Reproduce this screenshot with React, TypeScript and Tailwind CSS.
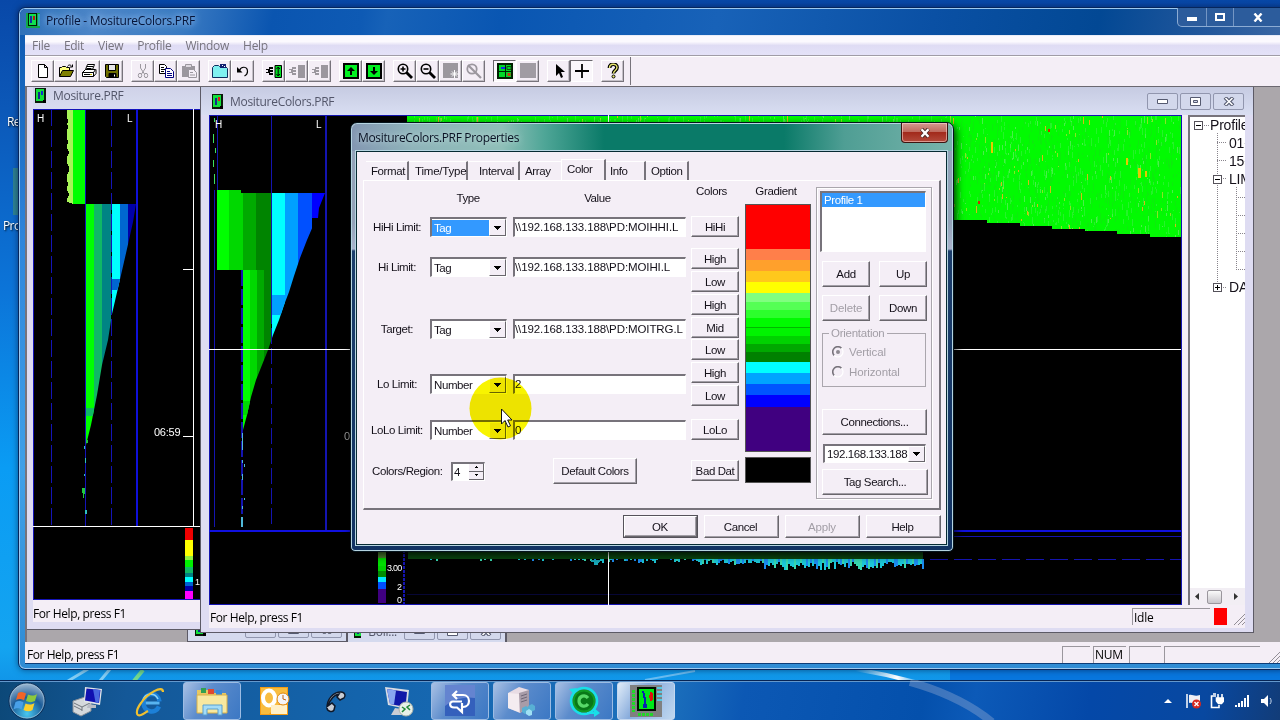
import clsx from "clsx";
import type { ReactNode } from "react";

const SEGOE = "font-['Open_Sans',sans-serif]";
const SANS =
  "font-['Liberation_Sans',sans-serif] text-[11.5px] tracking-[-0.4px] leading-[14px]";

// small seeded generator so the noise is the same on every render
function random(seed: number) {
  let s = seed;
  return () => {
    s = (s * 16807) % 2147483647;
    return s / 2147483647;
  };
}

// dashed line as a run of filled bars, stays sharp at one pixel
function dashes(x: number, y: number, end: number, on: number, off: number, vertical = true) {
  let d = "";
  for (let p = vertical ? y : x; p < end; p += on + off) {
    const len = Math.min(on, end - p);
    d += vertical ? `M${x} ${p}h1v${len}h-1z` : `M${p} ${y}h${len}v1h-${len}z`;
  }
  return d;
}

function Button({
  children,
  className,
  disabled,
}: {
  children: ReactNode;
  className?: string;
  disabled?: boolean;
}) {
  return (
    <button
      className={clsx(
        "flex shrink-0 items-center justify-center whitespace-nowrap border border-t-white border-l-white border-r-[#69666c] border-b-[#69666c] bg-[#f4eef6] shadow-[inset_-1px_-1px_0_#a29ea6]",
        disabled ? "text-[#a29ea6]" : "text-[#15111a]",
        className,
      )}
    >
      {children}
    </button>
  );
}

function DropArrow({ className }: { className?: string }) {
  return (
    <div
      className={clsx(
        "flex w-[17px] shrink-0 items-center justify-center self-stretch border border-t-white border-l-white border-r-[#69666c] border-b-[#69666c] bg-[#f4eef6]",
        className,
      )}
    >
      <svg width="7" height="4" shapeRendering="crispEdges">
        <path d="M0 0h7v1H0zM1 1h5v1H1zM2 2h3v1H2zM3 3h1v1H3z" />
      </svg>
    </div>
  );
}

function Combo({ value, active }: { value: string; active?: boolean }) {
  return (
    <div className="flex h-5 w-[77px] items-center border-t-2 border-l-2 border-r border-b border-t-[#77737b] border-l-[#77737b] border-r-white border-b-white bg-white">
      <div
        className={clsx(
          "flex h-[16px] grow items-center pt-px pl-[2px]",
          active && "bg-[#3399ff] text-white",
        )}
      >
        {value}
      </div>
      <DropArrow />
    </div>
  );
}

const limits = [
  { label: "HiHi Limit:", type: "Tag", value: "\\\\192.168.133.188\\PD:MOIHHI.L", gap: "mt-[11px]" },
  { label: "Hi Limit:", type: "Tag", value: "\\\\192.168.133.188\\PD:MOIHI.L", gap: "mt-[20px]" },
  { label: "Target:", type: "Tag", value: "\\\\192.168.133.188\\PD:MOITRG.L", gap: "mt-[42px]" },
  { label: "Lo Limit:", type: "Number", value: "2", gap: "mt-[35px]" },
  { label: "LoLo Limit:", type: "Number", value: "0", gap: "mt-[26px]" },
];

const colorButtons = [
  { label: "HiHi", gap: "mt-[11px]" },
  { label: "High", gap: "mt-[11px]" },
  { label: "Low", gap: "mt-[2px]" },
  { label: "High", gap: "mt-[2px]" },
  { label: "Mid", gap: "mt-[2px]" },
  { label: "Low", gap: "mt-[1px]" },
  { label: "High", gap: "mt-[2px]" },
  { label: "Low", gap: "mt-[2px]" },
  { label: "LoLo", gap: "mt-[13px]" },
  { label: "Bad Dat", gap: "mt-[20px]" },
];

const gradient = [
  "bg-[#ff0000] h-[44px]",
  "bg-[#ff7f4a] h-[11px]",
  "bg-[#ffa02c] h-[11px]",
  "bg-[#ffc81c] h-[11px]",
  "bg-[#ffff00] h-[11px]",
  "bg-[#80ff80] h-[9px]",
  "bg-[#55ff55] h-[8px]",
  "bg-[#2cff2c] h-[8px]",
  "bg-[#00fb00] h-[9px]",
  "bg-[#00f400] h-[9px] border-t border-[#00b800]",
  "bg-[#00d200] h-[8px]",
  "bg-[#00a800] h-[8px]",
  "bg-[#008000] h-[10px]",
  "bg-[#00ffff] h-[11px]",
  "bg-[#00a4ff] h-[11px]",
  "bg-[#0055ff] h-[11px]",
  "bg-[#0000ff] h-[12px]",
  "bg-[#400080] h-[44px]",
];

function Tabs() {
  const tab = "flex h-[19px] items-center border-t border-white";
  return (
    <div className="flex h-[21px] items-end pl-[9px]">
      <div className={clsx(tab, "w-[43px] border-r-2 border-r-[#77737b] pl-[5px]")}>Format</div>
      <div className={clsx(tab, "w-[59px] border-r-2 border-r-[#77737b] pl-[6px] tracking-[-0.2px]")}>Time/Type</div>
      <div className={clsx(tab, "w-[52px] border-r-2 border-r-[#77737b] pl-[11px] tracking-[-0.35px]")}>Interval</div>
      <div className={clsx(tab, "w-[41px] pl-[5px]")}>Array</div>
      <div className="flex h-[21px] w-[45px] items-start border-t border-l border-r-2 border-white border-r-[#77737b] pt-[2px] pl-[5px]">
        Color
      </div>
      <div className={clsx(tab, "w-[40px] border-r-2 border-r-[#77737b] pl-[4px]")}>Info</div>
      <div className={clsx(tab, "w-[43px] border-r-2 border-r-[#77737b] pl-[5px]")}>Option</div>
    </div>
  );
}

function LimitsForm() {
  return (
    <div className="w-[323px] pt-[10px]">
      <div className="flex h-[15px]">
        <div className="w-[66px]" />
        <div className="w-[82px] text-center">Type</div>
        <div className="w-[184px] text-center">Value</div>
      </div>
      {limits.map((l, i) => (
        <div key={l.label} className={clsx("flex h-5 items-center", l.gap)}>
          <div className="w-[66px] text-center">{l.label}</div>
          <Combo value={l.type} active={i === 0} />
          <div className="ml-[6px] flex h-5 w-[173px] items-start overflow-hidden whitespace-nowrap border-t-2 border-l-2 border-r border-b border-t-[#77737b] border-l-[#77737b] border-r-white border-b-white bg-white pt-px tracking-[-0.1px]">
            {l.value}
          </div>
        </div>
      ))}
      <div className="mt-[18px] flex h-[26px] items-center">
        <div className="w-[87px] pl-[8px]">Colors/Region:</div>
        <div className="flex h-[19px] w-[34px] border-t-2 border-l-2 border-r border-b border-t-[#77737b] border-l-[#77737b] border-r-white border-b-white bg-white">
          <span className="w-[16px] pt-px pl-px">4</span>
          <div className="flex w-[15px] flex-col">
            <div className="flex h-2 items-center justify-center border-r border-b border-[#69666c] bg-[#f4eef6]">
              <svg width="3" height="2" shapeRendering="crispEdges">
                <path d="M1 0h1v1H1zM0 1h3v1H0z" />
              </svg>
            </div>
            <div className="flex h-2 items-center justify-center border-r border-b border-[#69666c] bg-[#f4eef6]">
              <svg width="3" height="2" shapeRendering="crispEdges">
                <path d="M0 0h3v1H0zM1 1h1v1H1z" />
              </svg>
            </div>
          </div>
        </div>
        <Button className="ml-[68px] h-[26px] w-[84px]">Default Colors</Button>
      </div>
    </div>
  );
}

function Radio({ label, on }: { label: string; on?: boolean }) {
  return (
    <div className="flex h-5 items-center gap-[5px] pl-[9px] text-[#a29ea6]">
      <svg width="12" height="12" fill="none">
        <path d="M2.2 9.5A5 5 0 0 1 9.5 2.2" stroke="#77737b" strokeWidth="1.6" />
        <path d="M9.5 2.2A5 5 0 0 1 2.2 9.5" stroke="#fff" strokeWidth="1.2" />
        {on && <circle cx="6" cy="6" r="2" fill="#8d8991" />}
      </svg>
      <span className="tracking-[-0.1px]">{label}</span>
    </div>
  );
}

function ProfileGroup() {
  return (
    <div className="mt-[6px] ml-[5px] h-[312px] w-[116px] border border-[#aaa6ad] pt-[3px] pl-[3px] shadow-[inset_1px_1px_0_#fff,1px_1px_0_#fff]">
      <div className="h-[61px] w-[106px] border-t-2 border-l-2 border-r border-b border-t-[#77737b] border-l-[#77737b] border-r-white border-b-white bg-white">
        <div className="h-[14px] bg-[#3399ff] pl-[2px] leading-[15px] tracking-[-0.4px] text-white">Profile 1</div>
      </div>
      <div className="mt-[9px] ml-[2px] grid w-[105px] grid-cols-[48px_48px] gap-x-[9px] gap-y-[8px]">
        <Button className="h-[26px]">Add</Button>
        <Button className="h-[26px]">Up</Button>
        <Button className="h-[26px] tracking-[-0.1px]" disabled>
          Delete
        </Button>
        <Button className="h-[26px]">Down</Button>
      </div>
      <fieldset className="mt-[5px] ml-[2px] h-[61px] w-[104px] border border-[#aaa6ad]">
        <legend className="ml-[6px] px-[2px] tracking-[-0.25px] text-[#a29ea6]">Orientation</legend>
        <div className="mt-[2px]">
          <Radio label="Vertical" on />
          <Radio label="Horizontal" />
        </div>
      </fieldset>
      <Button className="mt-[22px] ml-[2px] h-[26px] w-[105px]">Connections...</Button>
      <div className="mt-[9px] ml-[3px] flex h-[19px] w-[103px] items-center border-t-2 border-l-2 border-r border-b border-t-[#77737b] border-l-[#77737b] border-r-white border-b-white bg-white">
        <span className="w-[83px] pl-[2px]">192.168.133.188</span>
        <DropArrow className="border-t-transparent border-l-transparent" />
      </div>
      <Button className="mt-[6px] ml-[2px] h-[26px] w-[106px]">Tag Search...</Button>
    </div>
  );
}

function PropertiesDialog() {
  return (
    <div
      className={clsx(
        SANS,
        "absolute top-[122px] left-[350px] flex h-[430px] w-[604px] flex-col rounded-t-[7px] rounded-b-[5px] border border-[#05141c] bg-[linear-gradient(#93a2b9,#93a2b9_100px,#aab3cc_126px,#1c3e6c_128px,#123363)] pr-[6px] pb-[6px] pl-[5px] text-[#15111a] shadow-[inset_0_0_0_1px_#b5d4e0,2px_3px_9px_rgba(0,0,0,.8)]",
      )}
    >
      <div className="-mr-[5px] -ml-[4px] mt-px flex h-[27px] shrink-0 justify-between rounded-t-[6px] bg-[linear-gradient(90deg,#8397b2,#8fb4ba_10%,#8fbfb8_25%,#4fa697_32%,#0a7a68_42%,#0a7a68_72%,#4f9e94_82%,#78b4ac)]">
        <span
          className={clsx(
            SEGOE,
            "pt-[6px] pl-[6px] text-[12px] leading-[15px] tracking-[-0.34px] text-[#0a1224] [text-shadow:0_0_6px_#cfe6e6]",
          )}
        >
          MositureColors.PRF Properties
        </span>
        <div className="-mt-px mr-[4px] flex h-[20px] w-[47px] items-center justify-center rounded-b-[4px] border border-t-0 border-[#3d1511] bg-[linear-gradient(#d39a90,#bf6b5f_45%,#a22a1c_50%,#b34a3c)] shadow-[inset_0_0_0_1px_rgba(255,220,215,.55)]">
          <svg width="12" height="10" viewBox="0 0 12 10">
            <path d="M2.5 1l7 8M9.5 1l-7 8" stroke="#4a2a28" strokeWidth="4" />
            <path d="M2.5 1.3l7 7.4M9.5 1.3l-7 7.4" stroke="#fff" strokeWidth="2.4" />
          </svg>
        </div>
      </div>
      <div className="h-[395px] border border-[#072a33] bg-[#f4eef6] pt-[7px] shadow-[0_0_0_1px_#b5d4e0]">
        <Tabs />
        <div className="ml-[6px] flex h-[330px] w-[578px] border-t border-l border-r-2 border-b-2 border-t-white border-l-white border-r-[#77737b] border-b-[#77737b]">
          <LimitsForm />
          <div className="ml-[4px] w-[48px] pt-[3px]">
            <div className="-mx-2 h-[21px] pr-[7px] text-center">Colors</div>
            {colorButtons.map((b, i) => (
              <Button key={i} className={clsx("h-[21px] w-full", b.gap)}>
                {b.label}
              </Button>
            ))}
          </div>
          <div className="ml-[6px] w-[66px] pt-[3px]">
            <div className="-mx-2 h-[20px] pr-[4px] text-center tracking-[-0.35px]">Gradient</div>
            <div className="border border-[#555]">
              {gradient.map((g) => (
                <div key={g} className={g} />
              ))}
            </div>
            <div className="mt-[5px] h-[26px] border border-[#555] bg-black" />
          </div>
          <ProfileGroup />
        </div>
        <div className="mt-[5px] flex gap-[6px] pl-[266px]">
          <div className="border border-[#55525a]">
            <Button className="h-[21px] w-[73px] pr-px">OK</Button>
          </div>
          <Button className="h-[23px] w-[75px] pr-[2px]">Cancel</Button>
          <Button className="h-[23px] w-[75px] pr-px tracking-[-0.2px]" disabled>
            Apply
          </Button>
          <Button className="h-[23px] w-[75px] pr-[2px]">Help</Button>
        </div>
      </div>
    </div>
  );
}

function ProfileIcon({ marker = "#1030d0" }: { marker?: string }) {
  return (
    <svg width="11" height="15" shapeRendering="crispEdges">
      <path d="M0 0h11v15H0z" fill="#0a1a0a" />
      <path d="M1 1h8v12H1z" fill="#12e03c" />
      <path d="M3 4h2v7H3z" fill="#102a90" />
      <path d="M6 3h2v4H6z" fill={marker} />
      <path d="M8 12h3v3H8z" fill="#000" />
    </svg>
  );
}

const disabledInk = "#9b979e";
const toolGroups: ReactNode[][] = [
  [
    <path d="M3.5 1.5h6l3 3v10h-9zM9.5 1.5v3h3" fill="#fff" stroke="#000" />,
    <g stroke="#000">
      <path d="M1.5 13.500V4.500h2l1-1h3l1 1h3v3" fill="#ffff80" />
      <path d="M1.500 13.500l3-6h11l-3 6z" fill="#808000" />
      <path d="M9.500 3.500c1-2 3-2 4.500 0M14.500 1.500v2.500h-2.500" fill="none" />
    </g>,
    <g stroke="#000">
      <path d="M4.500 6.500l2-5h7l-2 5M1.500 9.500l3-3h10l-2 3zM1.500 9.500h11v4h-11zM12.500 13.500l2.500-3v-4" fill="#fff" />
      <path d="M6 3.500h6M5.500 5.500h5M3 11.500h8" fill="none" />
      <path d="M9 11.500h2" stroke="#c0b000" />
    </g>,
    <g stroke="#000">
      <path d="M1.500 1.500h13v13h-12l-1-1z" fill="#6f6f00" />
      <path d="M4.500 1.500h7v6h-7z" fill="#e8e8e8" />
      <path d="M5 10.500h7v4h-7z" fill="#000" />
      <path d="M10.500 11.500v2" stroke="#fff" />
    </g>,
  ],
  [
    <g stroke={disabledInk} fill="none">
      <path d="M5.500 1v4l4 6M10.500 1v4l-4 6" />
      <ellipse cx="5" cy="12.500" rx="1.700" ry="2.200" />
      <ellipse cx="11" cy="12.500" rx="1.700" ry="2.200" />
    </g>,
    <g fill="#fff" stroke="#000080">
      <path d="M1.500 1.500h5l2 2v7h-7zM3 4.500h3M3 6.500h4M3 8.500h3" stroke="#000" />
      <path d="M7.500 5.500h5l3 3v6h-8zM9 8.500h3M9 10.500h5M9 12.500h5" />
    </g>,
    <g>
      <path d="M1 3h13v11H1z" fill={disabledInk} />
      <path d="M4.500 1.500h6v3h-6z" fill="#ddd8df" stroke={disabledInk} />
      <path d="M7.500 6.500h5l3 3v5h-8zM9 9.500h3M9 12h5" fill="#f4eef6" stroke={disabledInk} />
    </g>,
  ],
  [
    <g>
      <path d="M.5 4.500l2-2h4l1 1h6l2 2v9H.5z" fill="#80f0f0" stroke="#103060" />
      <path d="M8 1h6v4H8z" fill="#102070" />
      <path d="M10 2h1v1h-1zM12 3h1v1h-1z" fill="#fff" />
    </g>,
    <g>
      <path d="M4.500 7.500C6 3 12.500 3 12.500 8.500c0 2-1 3.500-3 4.500" fill="none" stroke="#000" strokeWidth="1.200" />
      <path d="M2 4v5.500h5.500z" />
    </g>,
  ],
  [
    <g>
      <path d="M0 6h3V4h4v2H4v1h3v2H4v1h3v2H3v-2H0V9h2V7H0z" />
      <path d="M9 2.500h6.500v12H9z" fill="#00e020" stroke="#000" />
      <path d="M12.200 4.500v8M10.500 6l1.700-2 1.700 2M10.500 11l1.700 2 1.700-2" stroke="#000" fill="none" />
    </g>,
    <g fill={disabledInk}>
      <path d="M0 6h3V4h4v2H4v1h3v2H4v1h3v2H3v-2H0V9h2V7H0z" />
      <path d="M9 2h7v13H9z" />
    </g>,
    <g fill={disabledInk}>
      <path d="M0 6h3V4h4v2H4v1h3v2H4v1h3v2H3v-2H0V9h2V7H0z" />
      <path d="M9 2h7v13H9z" />
    </g>,
  ],
  [
    <g>
      <path d="M1 1h14v14H1z" fill="#00f020" stroke="#000" strokeWidth="2" />
      <path d="M8 4l4 4H9v4H7V8H4z" />
    </g>,
    <g>
      <path d="M1 1h14v14H1z" fill="#00f020" stroke="#000" strokeWidth="2" />
      <path d="M8 12l4-4H9V4H7v4H4z" />
    </g>,
  ],
  [
    <g fill="none" stroke="#000">
      <circle cx="6" cy="6" r="4.700" strokeWidth="1.600" />
      <path d="M9.500 9.500l5.500 5.500" strokeWidth="2.800" />
      <path d="M3.500 6h5M6 3.500v5" strokeWidth="1.600" />
    </g>,
    <g fill="none" stroke="#000">
      <circle cx="6" cy="6" r="4.700" strokeWidth="1.600" />
      <path d="M9.500 9.500l5.500 5.500" strokeWidth="2.800" />
      <path d="M3.500 6h5" strokeWidth="1.600" />
    </g>,
    <g>
      <path d="M0 0h15v15H0z" fill={disabledInk} />
      <path d="M11.500 7v8M7.500 11h8M9 8.500l5 5M14 8.500l-5 5" stroke="#fff" />
    </g>,
    <g fill="none" stroke={disabledInk}>
      <circle cx="6" cy="6" r="4.700" strokeWidth="1.800" />
      <path d="M2 2l13 13" strokeWidth="2.200" />
    </g>,
  ],
  [
    <g>
      <path d="M1 1h14v14H1z" fill="#00d828" stroke="#002000" strokeWidth="2" />
      <path d="M8.500 2v12M2 8.500h12" stroke="#002000" />
      <path d="M4 4h4v2H4z" fill="#1030e0" />
      <path d="M10 3.500h4v3h-4z" fill="#00d828" stroke="#105010" />
      <path d="M10.500 10h3v3h-3z" fill="#c04010" />
    </g>,
    <path d="M0 0h16v15H0z" fill="#a09ca3" />,
  ],
  [
    <path d="M5 1v12l3-3 2 5 2-1-2-5h4z" />,
    <path d="M8 1v14M1 8h14" stroke="#000" strokeWidth="1.800" />,
  ],
  [
    <g fill="none">
      <path d="M4.500 5c0-5 7.500-5 7.500-.5 0 3-3.500 3-3.500 6" stroke="#000" strokeWidth="3.800" />
      <path d="M4.500 5c0-5 7.500-5 7.500-.5 0 3-3.500 3-3.500 6" stroke="#e8e870" strokeWidth="1.400" />
      <circle cx="8.500" cy="13.500" r="1.500" fill="#e8e870" stroke="#000" />
    </g>,
  ],
];

function Toolbar() {
  return (
    <div className="flex h-[30px] shrink-0 items-center gap-2 border-t border-white bg-[#f4eef6] pb-px pl-[6px]">
      {toolGroups.map((group, g) => (
        <div key={g} className="flex">
          {group.map((icon, i) => {
            const pressed = (g === 6 && i === 0) || (g === 7 && i === 1);
            return (
              <div
                key={i}
                className={clsx(
                  "flex h-[22px] w-[23px] items-center justify-center border",
                  pressed
                    ? "border-t-[#69666c] border-l-[#69666c] border-r-white border-b-white bg-[#faf7fb]"
                    : "border-t-white border-l-white border-r-[#77737b] border-b-[#77737b] shadow-[inset_-1px_-1px_0_#c4c0c7]",
                )}
              >
                <svg width="16" height="16" viewBox="0 0 16 16">
                  {icon}
                </svg>
              </div>
            );
          })}
        </div>
      ))}
      <div className="-ml-[2px] h-[28px] w-px bg-[#77737b]" />
    </div>
  );
}

function MoisturePlot() {
  const rnd = random(11);
  const ragged = Array.from({ length: 32 }, (_, i) => `${67 + (rnd() > 0.5 ? 1.5 : 0)},${109 + i * 3}`);
  return (
    <svg className="block" width="168" height="491" viewBox="33 109 168 491" shapeRendering="crispEdges">
      <path d="M33 109h168v491H33z" />
      <clipPath id="wedge">
        <path d="M86 204H136L133 222 129 240 124 262 118 288 112 314 108 340 102 365 97 395 91 425 86 445z" />
      </clipPath>
      <polygon points={`${ragged.join(" ")} 73,204 73,109`} fill="#a8f458" />
      <path d="M73 109h12v95H73z" fill="#00ff00" />
      <g fill="#1414b8">
        <path d="M33 109h1v491h-1zM33 109h168v1H33zM33 599h168v1H33zM85 109h1v417h-1z" />
        <path d={dashes(51, 109, 526, 17, 4)} />
        <path d={dashes(111, 109, 526, 17, 4)} />
      </g>
      <g clipPath="url(#wedge)">
        <path d="M86 204h8v250h-8z" fill="#00ff00" />
        <path d="M86 408h8v8h-8zM94 204h8v220h-8z" fill="#10b866" />
        <path d="M102 204h9v200h-9z" fill="#008484" />
        <path d="M112 204h8v130h-8z" fill="#00ffff" />
        <path d="M112 279h11v11h-11zM120 204h8v90h-8z" fill="#0066d0" />
        <path d="M128 204h9v40h-9z" fill="#0000a8" />
      </g>
      <path d="M136 109h2v417h-2z" fill="#1010d8" />
      <path d="M84 446h1v3h-1zM85 458h1v5h-1zM84 474h1v2h-1zM85 510h2v4h-2z" fill="#30c0c0" />
      <path d="M82 488h3v6h-1v4h-1v-5h-1zM86 440h2v3h-2z" fill="#20c840" />
      <path d="M193 109h1v417h-1zM33 526h168v1H33zM183 269h10v1h-10zM183 436h10v1h-10z" fill="#fff" />
      <path d="M185 528h8v12h-8z" fill="#f00000" />
      <path d="M185 540h8v16h-8z" fill="#ffff00" />
      <path d="M185 556h8v4h-8z" fill="#90f040" />
      <path d="M185 560h8v7h-8z" fill="#00f000" />
      <path d="M185 567h8v6h-8z" fill="#10b866" />
      <path d="M185 573h8v4h-8z" fill="#008080" />
      <path d="M185 577h8v5h-8z" fill="#00ffff" />
      <path d="M185 582h8v4h-8z" fill="#0060d0" />
      <path d="M185 586h8v5h-8z" fill="#0000a8" />
      <path d="M185 591h8v8h-8z" fill="#ff00ff" />
      <g fill="#fff" fontFamily="Liberation Sans" fontSize="10">
        <text x="37" y="122">H</text>
        <text x="127" y="122">L</text>
        <text x="154" y="436" fontSize="11">06:59</text>
        <text x="195" y="585" fontSize="9">1</text>
      </g>
    </svg>
  );
}

// lower edge of the heat map, one step per scanner pass
const steps = "M407 115H1181V237H1150V234H1117V231H1085V229H1052V226H1020V223H987V220H407z";

function ColorsPlot() {
  const rnd = random(77);
  const specks = Array.from({ length: 1900 }, () => {
    const wide = rnd() > 0.22;
    const hue = rnd();
    return {
      x: Math.round(wide ? 950 + rnd() * 231 : 407 + rnd() * 545),
      y: Math.round(115 + rnd() * (wide ? 122 : 7)),
      h: 1 + Math.round(rnd() * 6),
      fill: hue > 0.98 ? "#d8b818" : hue > 0.95 ? "#88e820" : hue > 0.65 ? "#24f428" : hue > 0.55 ? "#48f048" : "#0cec0c",
    };
  });
  const teeth = Array.from({ length: 258 }, (_, i) => {
    const x = 408 + i * 2;
    const amp = x < 600 ? 1 : x < 690 ? 3 : x < 760 ? 5 : 8;
    const there = x > 690 || rnd() > (x < 600 ? 0.8 : 0.5);
    return {
      x,
      h: there ? (x > 760 ? 3 : 1) + rnd() * amp : 0,
      fill: rnd() > 0.5 ? "#1cc8d8" : rnd() > 0.5 ? "#38d8b0" : "#1c8cf0",
    };
  });
  return (
    <svg className="block" width="973" height="490" viewBox="209 115 973 490" shapeRendering="crispEdges">
      <path d="M209 115h973v490H209z" />
      <clipPath id="heat">
        <path d={steps} />
      </clipPath>
      <clipPath id="wedge2">
        <path d="M217 190H241V193H325L319 208 318 218 313 226 307 240 300 258 294 276 289 292 284 305 279 320 273 335 268 350 262 365 256 380 251 397 247 415 243 430V270H217z" />
      </clipPath>
      <g clipPath="url(#heat)">
        <path d={steps} fill="#02fa02" />
        {specks.map((s, i) => (
          <path key={i} d={`M${s.x} ${s.y}h1v${s.h}h-1z`} fill={s.fill} />
        ))}
        <path d="M1048 129h2v3h-2zM978 201h2v3h-2z" fill="#c83000" />
        <path d="M1126 158h2v7h-2zM1138 168h3v10h-3zM1145 171h2v6h-2zM991 142h2v11h-2z" fill="#e8c800" />
      </g>
      <g clipPath="url(#wedge2)">
        <path d="M217 190h12v80h-12zM243 270h7v165h-7z" fill="#00ff00" />
        <path d="M229 190h14v80h-14zM250 270h7v165h-7zM243 401h7v14h-7z" fill="#00d800" />
        <path d="M243 193h13v77h-13zM257 270h7v110h-7z" fill="#00aa00" />
        <path d="M256 193h15v77h-15zM264 270h7v110h-7z" fill="#008400" />
        <path d="M272 193h13v150h-13z" fill="#00ffff" />
        <path d="M285 193h13v115h-13zM272 295h13v20h-13z" fill="#00a0ff" />
        <path d="M298 193h14v80h-14z" fill="#0050ff" />
        <path d="M312 193h14v25h-14z" fill="#0000ff" />
      </g>
      <g fill="#1414b0">
        <path d="M209 115h1v490h-1zM209 115h972v1H209zM1181 115h1v490h-1zM209 604h972v1H209zM214 190h1v337h-1z" />
        <path d="M217 115h1v75h-1zM271 115h1v193h-1z" />
        <path d={dashes(271, 308, 527, 16, 4)} />
        <path d={dashes(241, 270, 527, 16, 3)} />
        <path d={dashes(242, 270, 527, 16, 3)} />
        <path d={dashes(403, 550, 604, 3, 1)} />
        <path d={dashes(404, 550, 604, 3, 1)} />
        <path d="M325 115h2v415h-2z" />
        <path d="M209 530h972v2H209z" fill="#1010e0" />
        <path d="M954 536h227v1H954z" />
        <path d={dashes(930, 559, 1181, 18, 6, false)} />
        <path d="M407 594h774v1H407z" fillOpacity=".3" />
      </g>
      <path d="M214 118h1v4h-1zM213 134h1v9h-1zM215 148h1v5h-1zM213 160h1v7h-1zM214 174h1v10h-1z" fill="#40e060" />
      <path d="M242 433h1v17h-1zM242 460h1v3h-1zM244 464h1v3h-1zM242 474h1v6h-1zM244 498h1v2h-1zM242 506h1v3h-1zM241 517h2v10h-2z" fill="#50b8d8" />
      <path d="M408 550h515v9H408z" fill="#0a4a10" />
      {teeth.map((t) => (
        <path key={t.x} d={`M${t.x} 559h2v${t.h}h-2z`} fill={t.fill} />
      ))}
      <path d="M591 560h9v2l-2 1v2h-4v-3h-3z" fill="#18a8b8" />
      <path d="M378 550h8v8h-8z" fill="#508830" />
      <path d="M378 558h8v8h-8z" fill="#00e000" />
      <path d="M378 566h8v5h-8z" fill="#00d000" />
      <path d="M378 571h8v6h-8z" fill="#008c00" />
      <path d="M378 577h8v5h-8z" fill="#00e8ff" />
      <path d="M378 582h8v7h-8z" fill="#0050ff" />
      <path d="M378 589h8v14h-8z" fill="#400080" />
      <path d="M209 349h972v1H209zM608 115h1v490h-1z" fill="#fff" />
      <g fill="#fff" fontFamily="Liberation Sans" fontSize="10">
        <text x="215" y="128">H</text>
        <text x="316" y="128">L</text>
        <text x="344" y="440" fontSize="11" fill="#999">0</text>
        <text x="387" y="571" fontSize="9" textLength="15">3.00</text>
        <text x="397" y="590" fontSize="9">2</text>
        <text x="397" y="603" fontSize="9">0</text>
      </g>
    </svg>
  );
}

const treeRows = ["Profile", "01-", "15-", "LIM", "", "", "", "", "", "DA"];

function ProfileTree() {
  return (
    <div className="relative h-[490px] w-[57px] overflow-hidden border-t-2 border-l-2 border-[#77737b] bg-white">
      <svg className="absolute top-0 left-0" width="56" height="180" viewBox="1190 117 56 180" shapeRendering="crispEdges" fill="none">
        <path
          d="M1204 125.500h5M1217.500 133v154M1217 142.500h9M1217 160.500h9M1223 178.500h4M1223 287.500h4M1236.500 187v83M1236 197.500h9M1236 215.500h9M1236 233.500h9M1236 251.500h9M1236 269.500h9"
          stroke="#88848c"
          strokeDasharray="1 1"
        />
        <g fill="#fff" stroke="#55525a">
          <path d="M1194.500 121.500h8v8h-8zM1213.500 175.500h8v8h-8zM1213.500 283.500h8v8h-8z" />
          <path d="M1196 125.500h5M1215 179.500h5M1215 287.500h5M1217.500 285v5" stroke="#000" />
        </g>
      </svg>
      <div className="font-['Liberation_Sans',sans-serif] text-[14px] leading-[18px] tracking-[-0.2px] text-[#15111a]">
        {treeRows.map((r, i) => (
          <div key={i} className={clsx("relative -top-px h-[18px] whitespace-nowrap", i === 0 ? "pl-[20px]" : "pl-[39px]")}>
            {r}
          </div>
        ))}
      </div>
      <div className="mt-[291px] flex h-[17px] items-center bg-[#f2eef4] pl-[5px]">
        <svg width="5" height="7">
          <path d="M4 0v7L0 3.500z" fill="#333" />
        </svg>
        <div className="ml-[7px] h-[14px] w-[15px] rounded-[2px] border border-[#9a969d] bg-[linear-gradient(#fafafa,#c9c6cc)]" />
        <svg className="ml-[12px]" width="5" height="7">
          <path d="M0 0v7l4-3.500z" fill="#333" />
        </svg>
      </div>
    </div>
  );
}

function Grip() {
  return (
    <svg width="12" height="12" stroke="#928e96" fill="none">
      <path d="M1 12L12 1M5 12l7-7M9 12l3-3" />
    </svg>
  );
}

function ChildControls() {
  const box = "flex h-[17px] w-[31px] items-center justify-center rounded-[2px] border border-[#9196ae] bg-[#d3d8ec]";
  return (
    <div className="flex gap-[2px]">
      <div className={box}>
        <svg width="11" height="5">
          <path d="M.5.500h10v4H.5z" fill="#fff" stroke="#555a70" />
        </svg>
      </div>
      <div className={box}>
        <svg width="11" height="9">
          <path d="M.5.500h10v8H.5z" fill="#fff" stroke="#555a70" />
          <path d="M3.500 3.500h4v2h-4z" fill="#d3d8ec" stroke="#555a70" />
        </svg>
      </div>
      <div className={box}>
        <svg width="12" height="9">
          <path d="M2 .5l8 8M10 .5l-8 8" stroke="#555a70" strokeWidth="3.800" />
          <path d="M2.500 1l7 7M9.500 1l-7 7" stroke="#fff" strokeWidth="1.600" />
        </svg>
      </div>
    </div>
  );
}

function MoistureWindow() {
  return (
    <div className="absolute top-0 left-[2px] flex h-[543px] w-[176px] flex-col border-b border-[#5c5a66] bg-[#dedcf2] pl-[6px]">
      <div className="flex h-[22px] items-start gap-[7px] bg-[linear-gradient(#cfd2e8,#d8dcf0)] pt-px pl-[2px] text-[#53566a]">
        <ProfileIcon />
        <span className="leading-[15px] tracking-[-0.3px]">Mositure.PRF</span>
      </div>
      <MoisturePlot />
      <div className="h-[22px] bg-[#f4eef6] pt-[6px] leading-[16px] tracking-[-0.4px] text-black">For Help, press F1</div>
    </div>
  );
}

function ColorsWindow() {
  return (
    <div className="absolute top-0 left-[175px] flex h-[546px] w-[1054px] flex-col border-r border-b border-l border-[#5c5a66] bg-[#dedcf2] pr-[8px] pl-[8px]">
      <div className="-mx-[8px] flex h-[28px] items-start justify-between bg-[linear-gradient(#c6cbe2,#d9def2)] pt-[6px] pr-[9px] pl-[11px] text-[#53566a]">
        <div className="flex gap-[7px] pt-[1px]">
          <ProfileIcon marker="#e02010" />
          <span className="leading-[15px] tracking-[-0.3px]">MositureColors.PRF</span>
        </div>
        <ChildControls />
      </div>
      <div className="flex justify-between bg-[#f4eef6]">
        <ColorsPlot />
        <ProfileTree />
      </div>
      <div className="flex h-[23px] items-center bg-[#f4eef6] text-black">
        <span className="grow pt-[2px] pl-px tracking-[-0.4px]">For Help, press F1</span>
        <div className="flex h-[17px] w-[78px] items-center border-t border-l border-[#9a969d] pt-px pl-px">Idle</div>
        <div className="ml-[4px] h-[17px] w-[13px] bg-[#ff0000]" />
        <div className="ml-[6px] pt-[5px]">
          <Grip />
        </div>
      </div>
    </div>
  );
}

// minimised children, only their bottom edge shows below the open windows
function MinimizedWindows() {
  return (
    <div className="absolute bottom-0 left-[162px] flex h-[22px] text-[#53566a]">
      <div className="flex w-[161px] items-start justify-between border-r-2 border-b border-l border-[#5c5a66] bg-[#d5daee] pt-px pr-[4px] pl-[7px]">
        <ProfileIcon />
        <ChildControls />
      </div>
      <div className="flex w-[159px] items-start gap-[7px] border-r-2 border-[#5c5a66] bg-[#d5daee] pt-[3px] pr-[4px] pl-[6px]">
        <ProfileIcon />
        <span className="grow pt-px leading-[15px]">Boil...</span>
        <ChildControls />
      </div>
    </div>
  );
}

function MainWindow() {
  return (
    <div
      className={clsx(
        SEGOE,
        "absolute top-[7px] left-[18px] flex h-[663px] w-[1270px] flex-col rounded-[7px] border border-[#06265c] bg-[linear-gradient(#0b55ad,#2f86dc_35%,#3fa0e8_70%,#2f8cd4)] pl-[6px] text-[12px] tracking-[-0.25px] shadow-[inset_0_0_0_1px_#9cc8f0,0_0_6px_rgba(0,0,30,.5)]",
      )}
    >
      <div className="-ml-[5px] mt-px flex h-[26px] shrink-0 rounded-tl-[6px] bg-[linear-gradient(100deg,#2e6fb8,#4c86c8_6%,#3a7ac2_13%,#0a55b0_20%,#0e5ab4_27%,#1762b8_29%,#0956b2_38%,#1862b8_55%,#0a50a4_72%,#024894_85%,#24589c_94%,#3c68a4)]">
        <div className="flex grow gap-[6px] pt-[4px] pl-[6px]">
          <svg width="14" height="15" shapeRendering="crispEdges">
            <path d="M0 0h14v15H0z" fill="#10a848" />
            <path d="M2 0h9v13H2z" fill="#001800" />
            <path d="M3 1h7v11H3z" fill="#10e050" />
            <path d="M4 3h2v7H4z" fill="#1030a0" />
            <path d="M7 3h2v4H7z" fill="#b02010" />
            <path d="M12 1h2v12h-2z" fill="#30a8b8" />
          </svg>
          <span className="leading-[16px] text-[#061438] [text-shadow:0_0_6px_#9cc4f0,0_0_9px_#9cc4f0]">
            Profile - MositureColors.PRF
          </span>
        </div>
        <div className="-mt-px flex h-[19px] w-[110px] rounded-bl-[5px] border border-t-0 border-[#8cacd4] bg-[#2c5c9c]">
          <div className="flex w-[29px] items-center justify-center border-r border-[#7496c4]">
            <div className="mt-1 h-[4px] w-[10px] bg-white" />
          </div>
          <div className="flex w-[27px] items-center justify-center border-r border-[#7496c4]">
            <div className="h-[8px] w-[10px] border-2 border-white" />
          </div>
          <div className="flex w-[47px] items-center justify-center">
            <svg width="10" height="9">
              <path d="M1.500.500l7 8M8.500.500l-7 8" stroke="#fff" strokeWidth="2.400" />
            </svg>
          </div>
        </div>
      </div>
      <div className="flex h-[20px] shrink-0 items-center gap-[14px] border-t border-[#e8ecf8] bg-[linear-gradient(#fbf9fe_30%,#dfdcf4_50%,#e4e2f8)] pl-[7px] tracking-[-0.28px] text-[#77747e]">
        {["File", "Edit", "View", "Profile", "Window", "Help"].map((m) => (
          <span key={m}>{m}</span>
        ))}
      </div>
      <div className="h-px shrink-0 bg-[#a09ca6]" />
      <Toolbar />
      <div className="relative h-[556px] shrink-0 overflow-hidden border-t border-[#6b6870] bg-[#aba7ab] shadow-[inset_2px_0_0_#77737b]">
        <MinimizedWindows />
        <MoistureWindow />
        <ColorsWindow />
      </div>
      <div className="flex h-[21px] shrink-0 items-center bg-[#f4eef6] pr-[7px] text-black">
        <span className="w-[1037px] pt-[4px] pl-[2px] tracking-[-0.45px]">For Help, press F1</span>
        <div className="flex gap-[3px] pt-[3px]">
          <div className="h-[17px] w-[28px] border-t border-l border-[#9a969d]" />
          <div className="flex h-[17px] w-[33px] items-center border-t border-l border-[#9a969d] pl-px">NUM</div>
          <div className="h-[17px] w-[32px] border-t border-l border-[#9a969d]" />
          <div className="h-[17px] w-[96px] border-t border-l border-[#9a969d]" />
        </div>
        <div className="ml-[8px] pt-[9px]">
          <Grip />
        </div>
      </div>
      <div className="h-px bg-[#0c3c78]" />
    </div>
  );
}

function StartOrb() {
  return (
    <svg width="38" height="38" viewBox="0 0 38 38">
      <defs>
        <radialGradient id="orb" cx=".5" cy=".85" r=".9">
          <stop offset="0" stopColor="#48c8f0" />
          <stop offset=".5" stopColor="#1c5c98" />
          <stop offset="1" stopColor="#b4c8dc" />
        </radialGradient>
      </defs>
      <circle cx="19" cy="19" r="18" fill="url(#orb)" stroke="#0c2c54" />
      <circle cx="19" cy="19" r="17" fill="none" stroke="#a4c4dc" strokeOpacity=".7" />
      <path d="M10 11c3-2 6-1 8 .500l-2 7c-2-1.500-5-2-8-.5z" fill="#f06428" />
      <path d="M20 12.500c3 1.500 6 1.500 9-.5l-2 7c-3 1.500-6 1.500-9 0z" fill="#8cc83c" />
      <path d="M7.500 20c3-1.500 6-1 8 .5l-2 7c-2-1.500-5-2-8 0z" fill="#48a0e8" />
      <path d="M17.500 21.500c3 1.500 6 1.500 9-.5l-2 7c-3 2-6 1.500-9 0z" fill="#fcd02c" />
    </svg>
  );
}

const taskIcons = {
  remote: (
    <g>
      <path d="M2 17l12-4 6 5v9l-10 5-8-4z" fill="#d4d8dc" stroke="#888f98" />
      <path d="M3 19l8 4v4M3 22l8 4M11 23l8-4" stroke="#70767e" fill="none" />
      <path d="M14 3l17 2-2 16-16-3z" fill="#e0e4e8" />
      <path d="M15.500 4.500l14 1.500-1.500 13-14-2.500z" fill="#1010b0" />
      <path d="M22 5l7 1-1.500 13-3-.5z" fill="#4868e0" />
      <path d="M17 20l8 1v3h-9z" fill="#b8bcc4" />
    </g>
  ),
  ie: (
    <g fill="none">
      <path d="M26.500 19H11" stroke="#58b4f0" strokeWidth="3" />
      <path d="M26.500 17.500c-1-10-15-10-16 1 0 10 12 12 15.500 4" stroke="#1c80d8" strokeWidth="4.500" />
      <path d="M10 16c2-7 12-8 15-1" stroke="#90d4f8" strokeWidth="1.500" />
      <path d="M30 8c0-8-16 2-22 11C2 27 3 33 8 31c3-1 5-3 7-4" stroke="#f0c030" strokeWidth="2.200" />
    </g>
  ),
  explorer: (
    <g>
      <path d="M2 6h12l2 3h15v20H2z" fill="#e8c860" />
      <path d="M6 4h5v5H6z" fill="#30a050" />
      <path d="M13 5h6v5h-6z" fill="#e04830" />
      <path d="M21 6h6v5h-6z" fill="#3888d8" />
      <path d="M2 11h30v18H2z" fill="#f8e8a0" stroke="#d8b048" />
      <path d="M8 31V21h19v10h-4v-6H12v6z" fill="#a4dcf8" stroke="#58a0d0" />
    </g>
  ),
  outlook: (
    <g>
      <path d="M3 3h28v28H3z" fill="#f49c14" />
      <path d="M4 4h26v8L12 30H4z" fill="#f8bc40" />
      <ellipse cx="12" cy="14" rx="6" ry="7.500" fill="none" stroke="#fff" strokeWidth="4" />
      <path d="M14 21h16v9H14z" fill="#fff0c8" />
      <circle cx="26" cy="15" r="6" fill="#f4f4f8" stroke="#e08810" />
      <path d="M26 11v4l3 1" fill="none" stroke="#c06010" />
    </g>
  ),
  phone: (
    <path
      d="M9 22l4-3 3 3-1 4c-2 3-7 1-7-2 0-9 6-16 14-16 4 0 5 4 3 6l-4 2-3-3 2-3c-6 1-9 6-11 12z"
      fill="#c8ccd4"
      stroke="#101828"
      strokeWidth="1.500"
    />
  ),
  desktop: (
    <g>
      <path d="M4 3l24 3-2 19-19-4z" fill="#d8dce4" />
      <path d="M6 5l20 3-1.500 15L9 20z" fill="#1018a8" />
      <path d="M6 5l9 1.500-2 14-4-.5z" fill="#88a8f0" />
      <path d="M14 24l6 1 4 6H10z" fill="#c8ccd4" />
      <circle cx="25" cy="25" r="7" fill="#e8f0e8" stroke="#a8b0a8" />
      <path d="M21 23l3 2-3 3M29 21l-3 2 3 3" fill="none" stroke="#208838" strokeWidth="1.500" />
    </g>
  ),
  arrows: (
    <g>
      <path d="M2 1h30v31H2z" fill="#3460bc" />
      <path d="M2 1h30v13C20 12 10 16 2 22z" fill="#6484d0" />
      <path
        d="M14 7l-4 4 4 4M10 11h10c8 0 8 12 0 12h-1M19 19v9l-5-4.500h-3c-5 0-5-6-1-6h9"
        fill="none"
        stroke="#fff"
        strokeWidth="2.200"
      />
    </g>
  ),
  server: (
    <g>
      <path d="M3 9L14 3l10 3v17l-9 6-12-5z" fill="#e8dce4" />
      <path d="M14 9l10-3v17l-9 6z" fill="#a89ca8" />
      <path d="M3 9l11 1v18L3 24z" fill="#f4ecf0" />
      <path d="M16 12l6-2M16 15l6-2M16 18l6-2" stroke="#706878" />
      <path d="M17 24l4-2 3 2v4l-4 2-3-2zM23 22l4-2 3 2v4l-4 2-3-2z" fill="#58b0d4" />
      <path d="M21 27l3-2 3 2v4l-3 1-3-2z" fill="#a0e0f4" />
    </g>
  ),
  connect: (
    <g fill="none">
      <circle cx="17" cy="17" r="13" stroke="#18e0e8" strokeWidth="2.600" />
      <circle cx="17" cy="17" r="10.500" fill="#087818" stroke="#109c24" strokeWidth="2" />
      <path d="M21 14c-3-4-9-2-9 3s6 7 9 3" stroke="#58d868" strokeWidth="3.200" />
      <path d="M2 5l8-1-3 6zM27 24l6 5-6 4v-3h-7v-2h7z" fill="#18e0e8" />
    </g>
  ),
  profile: (
    <g shapeRendering="crispEdges">
      <path d="M1 1h32v32H1z" fill="#808080" />
      <path d="M9 4h17v22H9z" fill="#00e818" stroke="#001000" strokeWidth="2" />
      <path d="M13 7h2l2 8 1 9h-4l1-8z" fill="#0820b0" />
      <path d="M22 7l2 3v5l-2 3-2-5z" fill="#e01010" />
      <path d="M28 4h5M28 8h5M28 12h5M28 16h5" stroke="#58c8e0" strokeWidth="1.500" />
      <path d="M4 6v22M9 30h16" stroke="#20d828" strokeWidth="3" strokeDasharray="3 1" />
    </g>
  ),
};

function TaskButton({ icon, open }: { icon: keyof typeof taskIcons; open?: boolean | "active" }) {
  return (
    <div
      className={clsx(
        "flex h-[38px] items-center justify-center rounded-[3px] border",
        !open && "border-transparent",
        open === true && "border-[#9cbce4] bg-[linear-gradient(120deg,#a8c0e4,#5c8ccc_40%,#3c78c4)]",
        open === "active" && "border-[#c4d8f0] bg-[linear-gradient(120deg,#e0ecf8,#88acdc_40%,#c0d8f0)]",
      )}
    >
      <svg width="34" height="34" viewBox="0 0 34 34">
        {taskIcons[icon]}
      </svg>
    </div>
  );
}

function Taskbar() {
  return (
    <div className="absolute inset-x-0 bottom-0 flex h-[40px] items-center border-t border-[#062454] bg-[linear-gradient(100deg,#0c4878,#145898_10%,#1464ac_28%,#1c70bc_52%,#0c58b4_58%,#0450ac_72%,#0c5ab8_76%,#0448a8_85%,#0848a0_94%,#123c78)] pl-[8px] shadow-[inset_0_1px_0_#6498cc]">
      <StartOrb />
      <div className="ml-[13px] grid grid-cols-[repeat(10,58px)] gap-x-[4px] pt-px">
        <TaskButton icon="remote" />
        <TaskButton icon="ie" />
        <TaskButton icon="explorer" open />
        <TaskButton icon="outlook" />
        <TaskButton icon="phone" />
        <TaskButton icon="desktop" />
        <TaskButton icon="arrows" open />
        <TaskButton icon="server" open />
        <TaskButton icon="connect" open />
        <TaskButton icon="profile" open="active" />
      </div>
      <div className="ml-auto flex items-center gap-[11px] pr-[7px]">
        <svg width="8" height="5">
          <path d="M0 5l4-4 4 4z" fill="#fff" />
        </svg>
        <svg className="ml-[3px]" width="15" height="16">
          <path d="M1 1v14" stroke="#fff" strokeWidth="1.500" />
          <path d="M3 2c4-1 5 2 11 0v8c-5 2-7-1-11 0z" fill="#f0f0f4" />
          <circle cx="10.500" cy="11" r="4.500" fill="#d82820" />
          <path d="M8.500 9l4 4M12.500 9l-4 4" stroke="#fff" strokeWidth="1.400" />
        </svg>
        <svg className="-ml-[2px]" width="14" height="16" fill="none" stroke="#fff" strokeWidth="1.600">
          <path d="M6 3H1.500v11.500H9V12M3 1h3M8 1v4M12 1v4" />
          <path d="M6.500 5h7v3l-2 2.500h-3L6.500 8z" fill="#fff" />
        </svg>
        <svg width="15" height="12" fill="#fff">
          <path d="M0 10h2v2H0zM3 8h2v4H3zM6 6h2v6H6zM9 3h2v9H9zM12 0h2v12h-2z" />
        </svg>
        <svg width="12" height="14" fill="none">
          <path d="M0 5h3l4-4v12L3 9H0z" fill="#fff" />
          <path d="M9 4c1.500 2 1.500 4 0 6" stroke="#c8d8ec" />
        </svg>
      </div>
    </div>
  );
}

function Wallpaper() {
  return (
    <svg className="absolute inset-0" width="1280" height="720" fill="none">
      <defs>
        <linearGradient id="streak">
          <stop offset="0" stopColor="#fff" stopOpacity="0" />
          <stop offset=".7" stopColor="#fff" />
          <stop offset="1" stopColor="#fff" stopOpacity=".3" />
        </linearGradient>
      </defs>
      <path d="M950 670h330v10H950z" fill="#0468d8" fillOpacity=".7" />
      <path d="M68 681l20-12M100 681l10-12" stroke="#b4e4f8" strokeWidth="3" strokeOpacity=".7" />
      <path d="M134 681l9-11" stroke="#88e878" strokeWidth="4" strokeOpacity=".8" />
      <path d="M855 669q30 5 60 13" stroke="url(#streak)" strokeWidth="4" />
      <path d="M645 680l50-9" stroke="#90ccf4" strokeWidth="2" strokeOpacity=".7" />
      <path d="M13 168h12v47H13z" fill="#50a060" fillOpacity=".5" />
    </svg>
  );
}

export default function App() {
  return (
    <div className="relative h-[720px] w-[1280px] overflow-hidden bg-[linear-gradient(#0848a8,#0c58b8_15%,#0c74d8_40%,#0a9cf4_65%,#14a4f0_90%,#0c84e0)]">
      <Wallpaper />
      <div
        className={clsx(
          SEGOE,
          "absolute top-[113px] left-[3px] flex flex-col gap-[87px] text-[12px] leading-[17px] tracking-[-0.6px] text-white [text-shadow:1px_1px_2px_#000]",
        )}
      >
        <span className="pl-[4px]">Re</span>
        <span>Pro</span>
      </div>
      <MainWindow />
      <Taskbar />
      <svg className="absolute top-[680px] left-[900px]" width="180" height="40" fill="none">
        <path d="M10 2q50 14 82 40" stroke="#a8b8d8" strokeOpacity=".35" strokeWidth="8" />
      </svg>
      <PropertiesDialog />
      <svg className="absolute top-[377px] left-[469px] mix-blend-multiply" width="63" height="63">
        <circle cx="31.500" cy="31.500" r="31" fill="#f8f400" />
      </svg>
      <svg className="absolute top-[408px] left-[500px]" width="14" height="22" viewBox="0 0 14 22">
        <path d="M1.500 1v15l3.500-3.500L8 19l2.500-1.200L7.700 12H12z" fill="#fff" stroke="#111" />
      </svg>
    </div>
  );
}
